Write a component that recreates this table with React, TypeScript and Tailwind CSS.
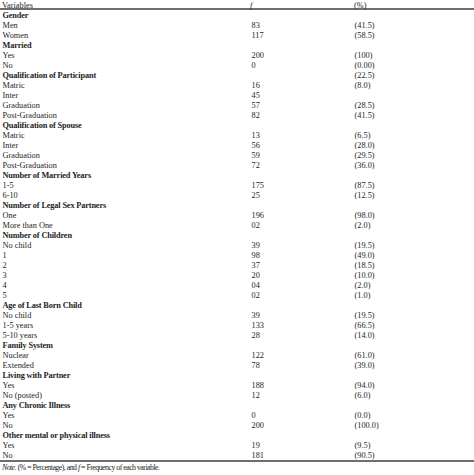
import React from "react";

type Row = { label: string; f?: string; p?: string; head?: boolean };

const rows: Row[] = [
  { label: "Gender", head: true },
  { label: "Men", f: "83", p: "(41.5)" },
  { label: "Women", f: "117", p: "(58.5)" },
  { label: "Married", head: true },
  { label: "Yes", f: "200", p: "(100)" },
  { label: "No", f: "0", p: "(0.00)" },
  { label: "Qualification of Participant", head: true, p: "(22.5)" },
  { label: "Matric", f: "16", p: "(8.0)" },
  { label: "Inter", f: "45" },
  { label: "Graduation", f: "57", p: "(28.5)" },
  { label: "Post-Graduation", f: "82", p: "(41.5)" },
  { label: "Qualification of Spouse", head: true },
  { label: "Matric", f: "13", p: "(6.5)" },
  { label: "Inter", f: "56", p: "(28.0)" },
  { label: "Graduation", f: "59", p: "(29.5)" },
  { label: "Post-Graduation", f: "72", p: "(36.0)" },
  { label: "Number of Married Years", head: true },
  { label: "1-5", f: "175", p: "(87.5)" },
  { label: "6-10", f: "25", p: "(12.5)" },
  { label: "Number of Legal Sex Partners", head: true },
  { label: "One", f: "196", p: "(98.0)" },
  { label: "More than One", f: "02", p: "(2.0)" },
  { label: "Number of Children", head: true },
  { label: "No child", f: "39", p: "(19.5)" },
  { label: "1", f: "98", p: "(49.0)" },
  { label: "2", f: "37", p: "(18.5)" },
  { label: "3", f: "20", p: "(10.0)" },
  { label: "4", f: "04", p: "(2.0)" },
  { label: "5", f: "02", p: "(1.0)" },
  { label: "Age of Last Born Child", head: true },
  { label: "No child", f: "39", p: "(19.5)" },
  { label: "1-5 years", f: "133", p: "(66.5)" },
  { label: "5-10 years", f: "28", p: "(14.0)" },
  { label: "Family System", head: true },
  { label: "Nuclear", f: "122", p: "(61.0)" },
  { label: "Extended", f: "78", p: "(39.0)" },
  { label: "Living with Partner", head: true },
  { label: "Yes", f: "188", p: "(94.0)" },
  { label: "No (posted)", f: "12", p: "(6.0)" },
  { label: "Any Chronic Illness", head: true },
  { label: "Yes", f: "0", p: "(0.0)" },
  { label: "No", f: "200", p: "(100.0)" },
  { label: "Other mental or physical illness", head: true },
  { label: "Yes", f: "19", p: "(9.5)" },
  { label: "No", f: "181", p: "(90.5)" },
];

export default function App() {
  return (
    <div
      className="w-[474px] h-[475px] bg-white text-[#1e1e1e] text-[8.3px] overflow-hidden"
      style={{ fontFamily: '"Liberation Serif", "Times New Roman", serif' }}
    >
      <div className="grid grid-cols-[247px_105px_1fr] h-[10px] leading-[11px] border-b-2 border-[#6e6e6e] pl-[2px]">
        <div>Variables</div>
        <div className="italic pl-[1px]">f</div>
        <div>(%)</div>
      </div>
      <div className="border-b-2 border-[#6e6e6e]">
        {rows.map((r, i) => (
          <div key={i} className="grid grid-cols-[247px_105px_1fr] h-[10px] leading-[12.5px] pl-[2.5px]">
            <div className={r.head ? "font-bold tracking-[-0.15px]" : ""}>{r.label}</div>
            <div className="pl-[2px]">{r.f ?? ""}</div>
            <div>{r.p ?? ""}</div>
          </div>
        ))}
      </div>
      <div className="pl-[2px] h-[11px] leading-[12px] text-[7.8px] tracking-[-0.5px] whitespace-nowrap">
        <span className="italic">Note.</span> (% = Percentage), and <span className="italic">f</span> = Frequency of each variable.
      </div>
    </div>
  );
}
